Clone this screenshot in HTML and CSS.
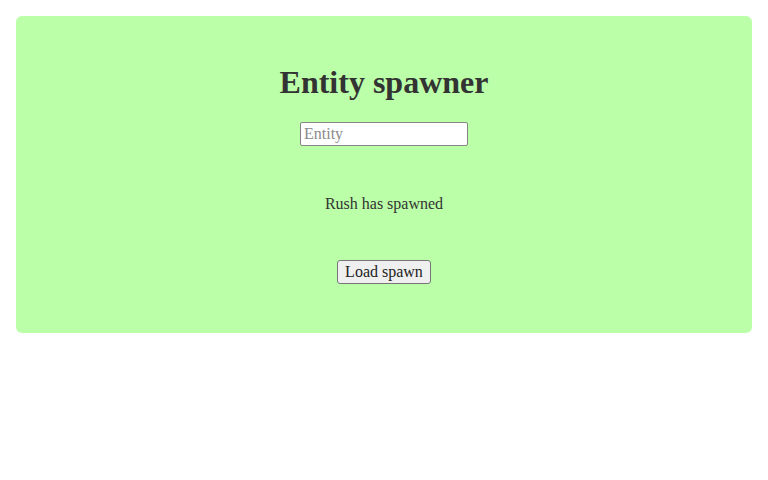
FILE: index.html
```html
<!DOCTYPE html>
<html>
<head>
<meta charset="utf-8">
<link rel="stylesheet" href="styles.css">
</head>
<body>
<div class="card">
  <h1 class="title">Entity spawner</h1>
  <input class="entity" type="text" placeholder="Entity">
  <p class="status">Rush has spawned</p>
  <button class="load">Load spawn</button>
</div>
</body>
</html>
```
FILE: styles.css
```css
html, body {
  margin: 0;
  padding: 0;
  background: #ffffff;
}
body {
  padding: 16px;
  font-family: "Liberation Serif", "Times New Roman", serif;
  color: #333333;
}
.card {
  background: #bbffa8;
  border-radius: 6px;
  padding: 27px 0 49px;
  display: flex;
  flex-direction: column;
  align-items: center;
  text-align: center;
}
.title {
  margin: 21px 0;
  font-size: 32px;
  line-height: 37px;
  font-weight: bold;
}
.entity {
  box-sizing: border-box;
  width: 168px;
  height: 24px;
  margin: 0;
  padding: 1px 3px;
  font-family: "Liberation Serif", serif;
  font-size: 16px;
  border: 1px solid #858585;
  border-radius: 2px;
  background: #ffffff;
  color: #000;
}
.entity::placeholder {
  color: #8a8a8a;
}
.status {
  margin: 49px 0 47px;
  font-size: 16px;
  line-height: 18px;
}
.load {
  box-sizing: border-box;
  height: 24px;
  padding: 1px 7px;
  margin: 0;
  font-family: "Liberation Serif", serif;
  font-size: 16px;
  color: #222;
  background: #efefef;
  border: 1px solid #767676;
  border-radius: 3px;
}
```
